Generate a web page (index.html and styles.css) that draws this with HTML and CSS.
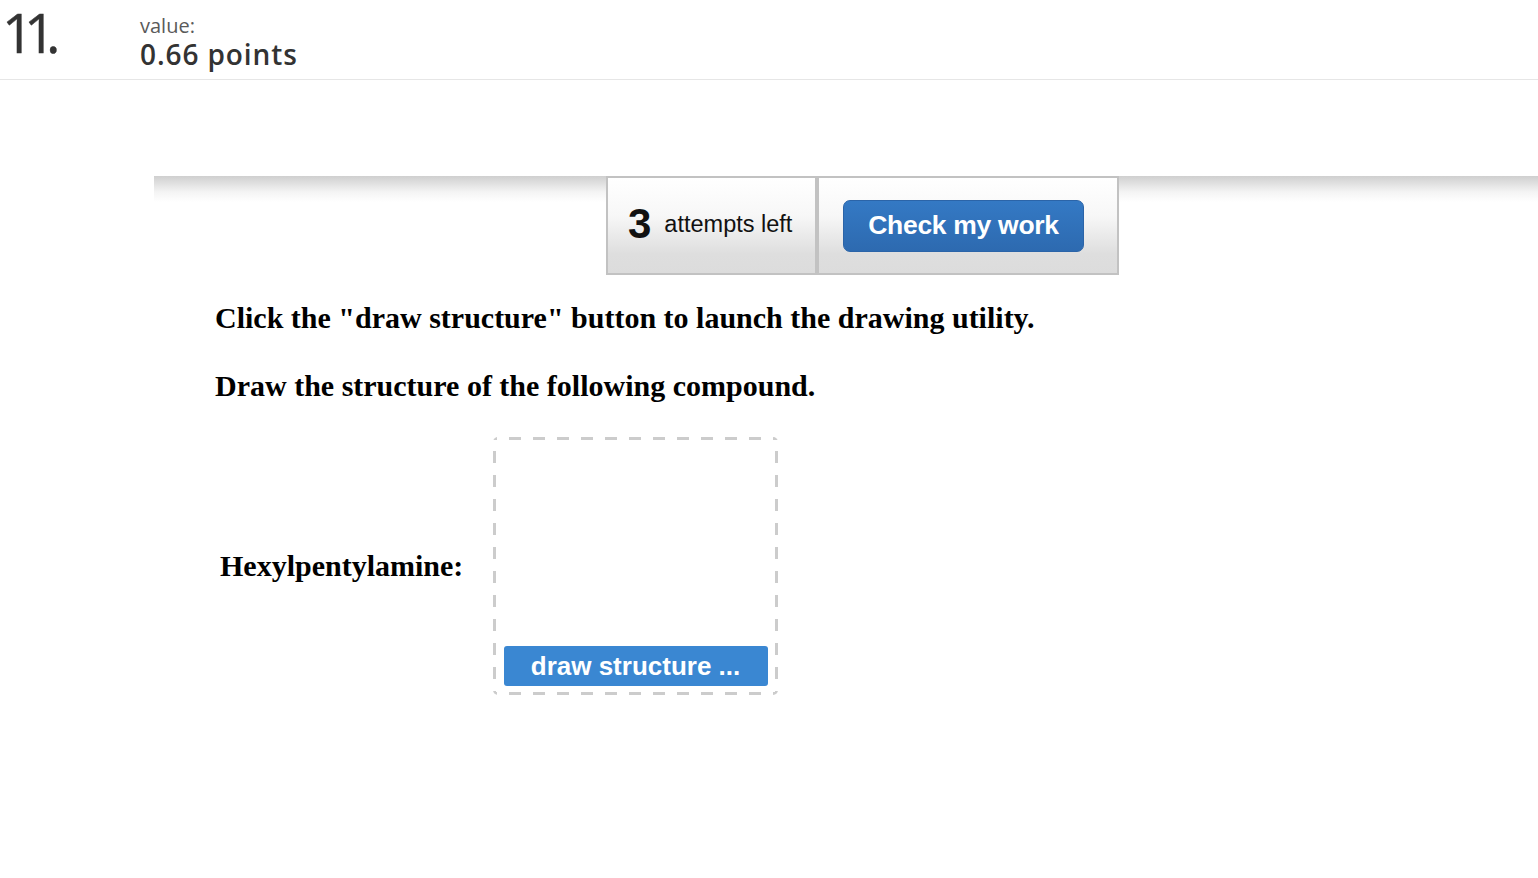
FILE: index.html
```html
<!DOCTYPE html>
<html>
<head>
<meta charset="utf-8">
<link rel="stylesheet" href="styles.css">
</head>
<body>
<header class="qhead">
  <div class="qnum">11.</div>
  <div class="qvalue">
    <div class="qvalue-label">value:</div>
    <div class="qvalue-points">0.66 points</div>
  </div>
</header>
<main class="qbody">
  <div class="toolbar">
    <div class="attempts"><span class="attempts-num">3</span><span class="attempts-text">attempts left</span></div>
    <div class="check-cell"><button class="check-btn">Check my work</button></div>
  </div>
  <div class="content">
    <p class="instr">Click the "draw structure" button to launch the drawing utility.</p>
    <p class="instr instr2">Draw the structure of the following compound.</p>
    <div class="compound">
      <div class="compound-name">Hexylpentylamine:</div>
      <div class="drawbox">
        <button class="draw-btn">draw structure ...</button>
      </div>
    </div>
  </div>
</main>
</body>
</html>
```
FILE: styles.css
```css
html, body { margin: 0; padding: 0; background: #fff; }
body { width: 1538px; height: 878px; overflow: hidden; }

.qhead {
  display: flex;
  box-sizing: border-box;
  height: 80px;
  border-bottom: 1px solid #e6e6e6;
}
.qnum {
  font-family: "Open Sans", Lato, sans-serif;
  font-weight: 400;
  font-size: 55px;
  line-height: 1;
  color: #333;
  padding-left: 2px;
  padding-top: 4px;
  width: 138px;
  letter-spacing: -9.5px;
  -webkit-text-stroke: 0.4px #333;
}
.qvalue {
  font-family: "Open Sans", Lato, sans-serif;
  padding-top: 14px;
}
.qvalue-label {
  font-size: 20px;
  line-height: 24px;
  color: #5a5a5a;
  margin-bottom: 1px;
}
.qvalue-points {
  font-size: 28px;
  line-height: 30px;
  color: #333;
  font-weight: 600;
  letter-spacing: 0.9px;
}

.qbody {
  margin-left: 154px;
  padding-top: 96px;
}
.toolbar {
  display: flex;
  padding-left: 452px;
  background: linear-gradient(to bottom, #cfcfcf 0px, #f4f4f4 16px, #fff 26px, #fff 100%);
}
.attempts, .check-cell {
  box-sizing: border-box;
  height: 99px;
  border: 2px solid #c2c2c2;
  background: linear-gradient(to bottom, #fff 0%, #f7f7f7 40%, #dedede 80%, #dcdcdc 100%);
  display: flex;
  align-items: center;
}
.attempts {
  width: 211px;
  padding-left: 20px;
  font-family: "Liberation Sans", Arial, sans-serif;
}
.attempts-num {
  font-size: 42px;
  font-weight: 700;
  color: #111;
  margin-right: 13px;
  margin-top: -4px;
}
.attempts-text {
  font-size: 23.5px;
  color: #111;
  margin-top: -2px;
}
.check-cell {
  width: 302px;
  padding-left: 24px;
}
.check-btn {
  width: 241px;
  height: 52px;
  border: 1px solid #2b64a8;
  border-radius: 7px;
  background: linear-gradient(to bottom, #3479c4 0%, #2d6ab0 100%);
  color: #fff;
  font-family: "Liberation Sans", Arial, sans-serif;
  font-weight: 700;
  font-size: 26.5px;
  letter-spacing: -0.3px;
  padding: 0;
}

.content {
  padding-left: 61px;
}
.instr {
  font-family: "Liberation Serif", "Times New Roman", serif;
  font-weight: 700;
  font-size: 30px;
  color: #000;
  margin: 0;
  line-height: 32px;
  padding-top: 27px;
}
.instr2 { padding-top: 36px; }

.compound {
  display: flex;
  align-items: center;
  margin-top: 35px;
}
.compound-name {
  font-family: "Liberation Serif", "Times New Roman", serif;
  font-weight: 700;
  font-size: 30px;
  color: #000;
  width: 278px;
  padding-left: 5px;
  box-sizing: border-box;
}
.drawbox {
  box-sizing: border-box;
  width: 285px;
  height: 258px;
  border-radius: 5px;
  background:
    linear-gradient(to right, #cccccc 12px, transparent 12px) 16px 0 / 24px 3px repeat-x,
    linear-gradient(to right, #cccccc 12px, transparent 12px) 16px 100% / 24px 3px repeat-x,
    linear-gradient(to bottom, #cccccc 12px, transparent 12px) 0 14px / 3px 24px repeat-y,
    linear-gradient(to bottom, #cccccc 12px, transparent 12px) 100% 14px / 3px 24px repeat-y;
  display: flex;
  align-items: flex-end;
  justify-content: center;
  padding-bottom: 9px;
}
.draw-btn {
  width: 264px;
  height: 40px;
  border: none;
  border-radius: 3px;
  background: #3a87d2;
  color: #fff;
  font-family: "Liberation Sans", Arial, sans-serif;
  font-weight: 700;
  font-size: 26px;
  padding: 0;
}
```
